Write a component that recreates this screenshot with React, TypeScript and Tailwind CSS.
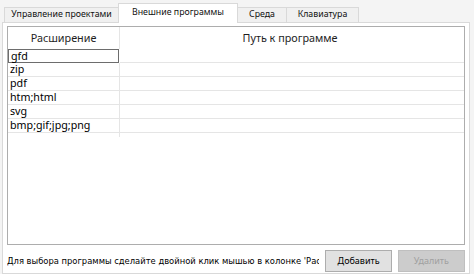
import React from "react";

const tabs = [
  { label: "Управление проектами", active: false, w: "w-[115px]" },
  { label: "Внешние программы", active: true, w: "w-[120px]" },
  { label: "Среда", active: false, w: "w-[50px]" },
  { label: "Клавиатура", active: false, w: "w-[73px]" },
];

const rows = ["gfd", "zip", "pdf", "htm;html", "svg", "bmp;gif;jpg;png"];

export default function App() {
  return (
    <div
      className="w-[474px] h-[274px] bg-[#f4f4f4] flex flex-col overflow-hidden text-[#000]"
      style={{ fontFamily: '"Noto Sans", "Open Sans", sans-serif' }}
    >
      {/* tab strip */}
      <div className="flex items-end h-[22px] pl-[4px] relative z-10">
        {tabs.map((t) =>
          t.active ? (
            <div
              key={t.label}
              className={
                t.w +
                " h-[20px] -mb-px -ml-px bg-white border border-b-0 border-[#d9d9d9] text-[8.8px] leading-[17px] text-center text-[#111]"
              }
            >
              {t.label}
            </div>
          ) : (
            <div
              key={t.label}
              className={
                t.w +
                " h-[15px] bg-[#f0f0f0] border border-b-0 border-[#d9d9d9] text-[8.8px] leading-[13px] text-center text-[#111] -ml-px first:ml-0"
              }
            >
              {t.label}
            </div>
          )
        )}
      </div>

      {/* page */}
      <div className="flex-1 ml-[2px] mr-[4px] bg-white border border-[#d9d9d9] flex flex-col px-[4px] pt-[3px]">
        <div className="h-[219px] border border-[#adadad] bg-white flex flex-col">
          <div className="flex h-[22px] text-[10.8px] leading-[22px] text-[#1e1e1e]">
            <div className="w-[112px] text-center border-r border-[#e5e5e5]">Расширение</div>
            <div className="flex-1 text-center pr-[4px]">Путь к программе</div>
          </div>
          {rows.map((r, i) => (
            <div key={r} className="flex h-[14px]">
              <div
                className={
                  "text-[10.7px] leading-[12px] pl-[2px] " +
                  (i === 0
                    ? "border border-[#6d6d6d] w-[111px] mr-px"
                    : "w-[112px] border-r border-b border-[#e5e5e5]")
                }
              >
                {r}
              </div>
              <div className="flex-1 border-b border-[#e5e5e5]" />
            </div>
          ))}
          <div className="flex flex-1">
            <div className="w-[112px] h-[4px] border-r border-[#e5e5e5]" />
          </div>
        </div>

        <div className="flex items-center mt-[5px] gap-[6px]">
          <div
            className="w-[316px] overflow-hidden whitespace-nowrap text-[8.4px] text-[#000]"
            style={{ fontFamily: '"DejaVu Sans", sans-serif' }}
          >
            Для выбора программы сделайте двойной клик мышью в колонке 'Расширение'
          </div>
          <button className="w-[67px] h-[22px] bg-[#e1e1e1] border border-[#adadad] text-[9px]">
            Добавить
          </button>
          <button className="w-[68px] h-[22px] bg-[#cccccc] border border-[#bfbfbf] text-[9px] text-[#a0a0a0]">
            Удалить
          </button>
        </div>
      </div>
    </div>
  );
}
